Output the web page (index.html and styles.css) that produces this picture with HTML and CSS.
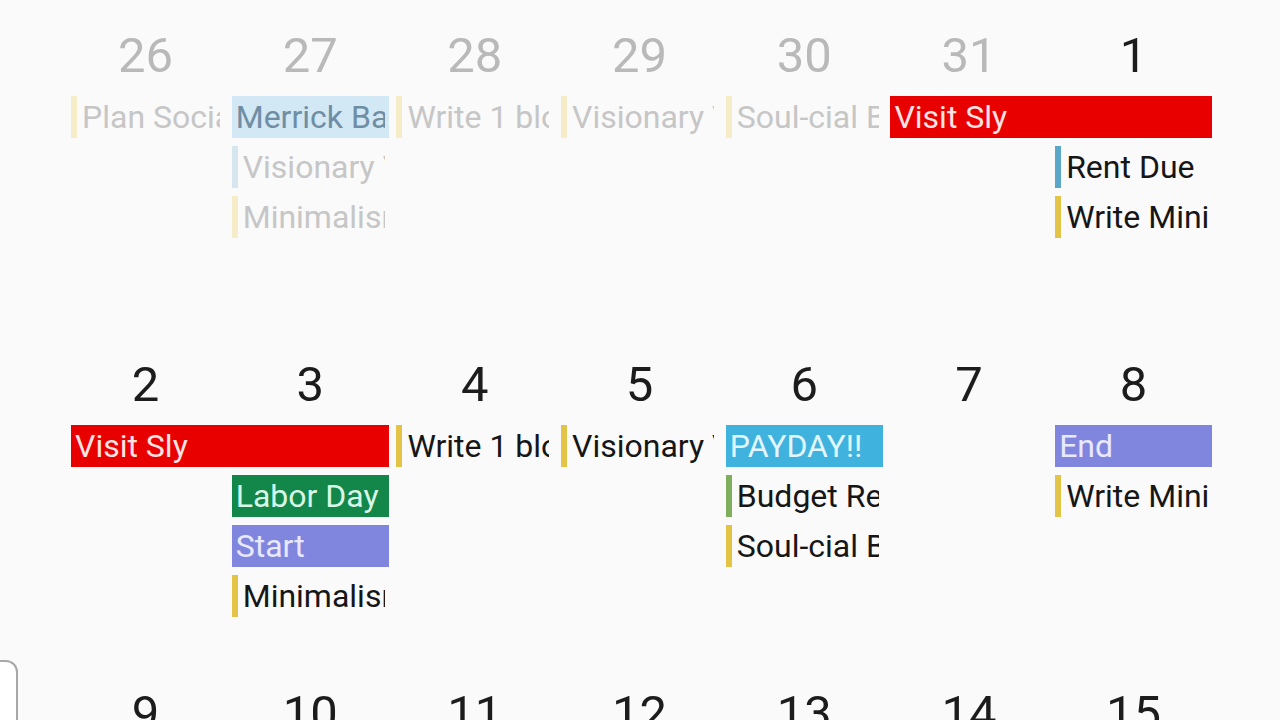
FILE: index.html
```html
<!DOCTYPE html>
<html lang="en">
<head>
<meta charset="utf-8">
<title>Calendar</title>
<link rel="stylesheet" href="styles.css">
</head>
<body>
<div class="month">
  <div class="week">
    <div class="day past c1">26</div>
    <div class="day past c2">27</div>
    <div class="day past c3">28</div>
    <div class="day past c4">29</div>
    <div class="day past c5">30</div>
    <div class="day past c6">31</div>
    <div class="day c7">1</div>

    <div class="ev stripe past y c1 r2"><span>Plan Social Media</span></div>
    <div class="ev fill past-blue c2 r2"><span>Merrick Bank</span></div>
    <div class="ev stripe past lb c2 r3"><span>Visionary Vision</span></div>
    <div class="ev stripe past y c2 r4"><span>Minimalism Post</span></div>
    <div class="ev stripe past y c3 r2"><span>Write 1 blog post</span></div>
    <div class="ev stripe past y c4 r2"><span>Visionary Vision</span></div>
    <div class="ev stripe past y c5 r2"><span>Soul-cial Butterfly</span></div>
    <div class="ev fill red c6 span2 r2"><span>Visit Sly</span></div>
    <div class="ev stripe blue c7 r3"><span>Rent Due</span></div>
    <div class="ev stripe y c7 r4"><span>Write Minimalism</span></div>
  </div>

  <div class="week">
    <div class="day c1">2</div>
    <div class="day c2">3</div>
    <div class="day c3">4</div>
    <div class="day c4">5</div>
    <div class="day c5">6</div>
    <div class="day c6">7</div>
    <div class="day c7">8</div>

    <div class="ev fill red c1 span2 r2"><span>Visit Sly</span></div>
    <div class="ev fill green c2 r3"><span>Labor Day</span></div>
    <div class="ev fill purple c2 r4"><span>Start</span></div>
    <div class="ev stripe y c2 r5"><span>Minimalism Post</span></div>
    <div class="ev stripe y c3 r2"><span>Write 1 blog post</span></div>
    <div class="ev stripe y c4 r2"><span>Visionary Vision</span></div>
    <div class="ev fill cyan c5 r2"><span>PAYDAY!!</span></div>
    <div class="ev stripe g c5 r3"><span>Budget Review</span></div>
    <div class="ev stripe y c5 r4"><span>Soul-cial Butterfly</span></div>
    <div class="ev fill purple c7 r2"><span>End</span></div>
    <div class="ev stripe y c7 r3"><span>Write Minimalism</span></div>
  </div>

  <div class="week">
    <div class="day c1">9</div>
    <div class="day c2">10</div>
    <div class="day c3">11</div>
    <div class="day c4">12</div>
    <div class="day c5">13</div>
    <div class="day c6">14</div>
    <div class="day c7">15</div>
  </div>
</div>
<div class="edge-card"></div>
</body>
</html>
```
FILE: styles.css
```css
html, body {
  margin: 0;
  padding: 0;
  background: #fafafa;
  width: 1280px;
  height: 720px;
  overflow: hidden;
  font-family: Roboto, "Noto Sans", "Liberation Sans", sans-serif;
}

.month {
  padding: 31px 0 0 67px;
  display: flex;
  flex-direction: column;
}

.week {
  height: 329px;
  flex: none;
  display: grid;
  grid-template-columns: repeat(7, 164.7px);
  grid-template-rows: 57px;
  grid-auto-rows: 42px;
  row-gap: 8px;
  align-content: start;
}

.day {
  grid-row: 1;
  width: 157px;
  text-align: center;
  font-size: 49px;
  line-height: 49px;
  color: #1c1c1c;
}

.day.past {
  color: #b9b9b9;
}

.c1 { grid-column: 1; }
.c2 { grid-column: 2; }
.c3 { grid-column: 3; }
.c4 { grid-column: 4; }
.c5 { grid-column: 5; }
.c6 { grid-column: 6; }
.c7 { grid-column: 7; }
.c1.span2 { grid-column: 1 / span 2; }
.c6.span2 { grid-column: 6 / span 2; }

.r2 { grid-row: 2; }
.r3 { grid-row: 3; }
.r4 { grid-row: 4; }
.r5 { grid-row: 5; }

.ev {
  height: 42px;
  margin-right: 7.7px;
  padding-right: 4px;
  font-size: 32px;
  line-height: 42px;
  white-space: nowrap;
  box-sizing: border-box;
  color: #161616;
  overflow: hidden;
}

.ev > span {
  display: block;
  overflow: hidden;
}

.ev.c1 { margin-left: 4px; }

.ev.stripe {
  border-left: 6px solid #e2c143;
  padding-left: 5px;
}

.ev.fill {
  padding-left: 4px;
  color: rgba(255, 255, 255, 0.88);
}

.ev.stripe.y { border-left-color: #e3c446; }
.ev.stripe.blue { border-left-color: #5aa7c8; }
.ev.stripe.g { border-left-color: #7fae5c; }

.ev.stripe.past { color: #c6c6c6; }
.ev.stripe.past.y { border-left-color: #f6ecc7; }
.ev.stripe.past.lb { border-left-color: #d5e6ef; }

.ev.fill.past-blue {
  background: #d2e8f5;
  color: #6f8ea4;
}

.ev.red { background: #e80000; color: #ffe3e3; }
.ev.green { background: #13864a; color: #d8f7e6; }
.ev.purple { background: #8086de; color: #e8e8ff; }
.ev.cyan { background: #3fb2de; color: #e2f6ff; }

.edge-card {
  position: absolute;
  left: -24px;
  top: 660px;
  width: 38px;
  height: 100px;
  border: 2px solid #a8a8a8;
  border-radius: 12px;
  background: #ffffff;
}
```
